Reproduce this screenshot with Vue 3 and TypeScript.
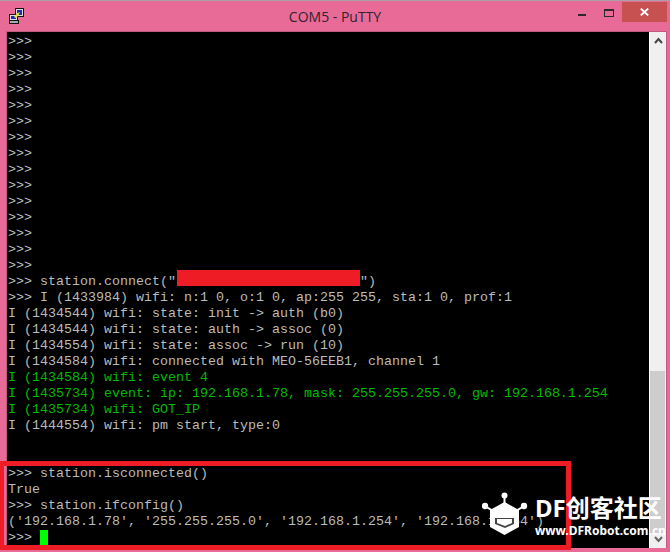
<script setup lang="ts">
interface Line { text: string; green?: boolean }
const prompts: Line[] = Array.from({ length: 15 }, () => ({ text: '>>>' }))
const lines: Line[] = [
  ...prompts,
  { text: '>>> station.connect("                       ")' },
  { text: '>>> I (1433984) wifi: n:1 0, o:1 0, ap:255 255, sta:1 0, prof:1' },
  { text: 'I (1434544) wifi: state: init -> auth (b0)' },
  { text: 'I (1434544) wifi: state: auth -> assoc (0)' },
  { text: 'I (1434554) wifi: state: assoc -> run (10)' },
  { text: 'I (1434584) wifi: connected with MEO-56EEB1, channel 1' },
  { text: 'I (1434584) wifi: event 4', green: true },
  { text: 'I (1435734) event: ip: 192.168.1.78, mask: 255.255.255.0, gw: 192.168.1.254', green: true },
  { text: 'I (1435734) wifi: GOT_IP', green: true },
  { text: 'I (1444554) wifi: pm start, type:0' },
  { text: '' },
  { text: '' },
  { text: '>>> station.isconnected()' },
  { text: 'True' },
  { text: '>>> station.ifconfig()' },
  { text: "('192.168.1.78', '255.255.255.0', '192.168.1.254', '192.168.1.254')" },
  { text: '>>> ' },
]
</script>

<template>
  <div class="window">
    <header class="titlebar">
      <div class="side">
        <svg class="app-icon" width="18" height="18" viewBox="0 0 18 18">
          <rect x="7.5" y="0.5" width="8" height="8" fill="#ddd" stroke="#111" />
          <rect x="9" y="2" width="5" height="5" fill="#1a2fb0" />
          <rect x="1.5" y="6.5" width="8" height="6" fill="#ddd" stroke="#111" />
          <rect x="3" y="8" width="5" height="3" fill="#1a2fb0" />
          <rect x="1.5" y="12.5" width="9" height="3" fill="#aaa" stroke="#111" />
          <path d="M6 9 L9 5.5 L12 4 L10.5 7 L8 10 Z" fill="#f5e616" />
        </svg>
      </div>
      <span class="title">COM5 - PuTTY</span>
      <div class="side controls">
        <span class="ctl"><i class="min"></i></span>
        <span class="ctl"><i class="max"></i></span>
        <span class="ctl close">
          <svg width="9" height="8" viewBox="0 0 9 8"><path d="M.8.5 8.2 7.5M8.2.5.8 7.5" stroke="#fff" stroke-width="1.8" fill="none" /></svg>
        </span>
      </div>
    </header>
    <div class="body">
      <main class="term">
        <div v-for="(l, i) in lines" :key="i" class="line" :class="{ green: l.green }">{{ l.text }}<span v-if="i === lines.length - 1" class="cursor"></span></div>
      </main>
      <aside class="scroll">
        <svg class="arrow" width="9" height="7" viewBox="0 0 9 7"><path d="M1 6 4.5 2 8 6" stroke="#444" stroke-width="2" fill="none" /></svg>
        <div class="track"><div class="thumb"></div></div>
        <svg class="arrow down" width="9" height="7" viewBox="0 0 9 7"><path d="M1 1 4.5 5 8 1" stroke="#666" stroke-width="2" fill="none" /></svg>
      </aside>
    </div>
    <div class="redact"></div>
    <div class="highlight"></div>
    <div class="mark">
      <svg class="mark-icon" width="46" height="46" viewBox="0 0 46 46">
        <g stroke="#fff" stroke-width="2" fill="#fff">
          <path d="M22.5 4V14M3 14 11 19M42 14 34 19" />
          <circle cx="22.5" cy="3.5" r="2" /><circle cx="3" cy="14" r="2.2" /><circle cx="42" cy="14" r="2.2" />
        </g>
        <path d="M22.5 10 37 18V35L22.5 43 8 35V18Z" fill="#fff" />
        <path d="M13 26H32V32L23 36 13 32Z" fill="#444" />
        <path d="M15 27H30V31L23 34 15 31Z" fill="#fff" />
      </svg>
      <div class="brand">
        <div class="b1">DF创客社区</div>
        <div class="b2">www.DFRobot.com.cn</div>
      </div>
    </div>
  </div>
</template>

<style>
html, body { margin: 0; background: #e86a96; overflow: hidden; }
</style>

<style scoped>
.window {
  position: relative;
  width: 670px;
  height: 552px;
  box-sizing: border-box;
  background: #e86a96;
  border-top: 1px solid #a8a0a4;
  overflow: hidden;
}
.titlebar {
  height: 30px;
  display: grid;
  grid-template-columns: 1fr auto 1fr;
  align-items: start;
  font-family: "Open Sans", "Noto Sans", sans-serif;
}
.side { display: flex; }
.app-icon { margin: 7px 0 0 8px; }
.title {
  font-size: 14px;
  line-height: 31px;
  color: #33222c;
}
.controls { justify-content: flex-end; margin: 1px 3px 0 0; }
.ctl {
  display: flex;
  align-items: center;
  justify-content: center;
  width: 27px;
  height: 20px;
}
.ctl.close { background: #c75050; width: 45px; }
.min { display: block; width: 8px; height: 2px; background: #2a2a2a; margin-top: 5px; }
.max { display: block; width: 8px; height: 5px; border: 1px solid #2a2a2a; border-top-width: 2px; margin-top: 2px; }
.body {
  display: flex;
  height: 517px;
  margin-left: 6px;
  margin-right: 3px;
  border: 1px solid #c05a80;
  border-bottom: 0;
  box-sizing: border-box;
}
.term {
  flex: 1;
  background: #000;
  padding-top: 2px;
  font-family: "Liberation Mono", monospace;
  font-size: 13.33px;
  line-height: 16px;
  color: #bbb;
  white-space: pre;
  overflow: hidden;
}
.line { height: 16px; padding-left: 1px; }
.green { color: #00bb00; }
.cursor {
  display: inline-block;
  width: 8px;
  height: 16px;
  background: #0f0;
  vertical-align: top;
}
.scroll {
  width: 17px;
  box-sizing: border-box;
  background: #f0f0f0;
  display: flex;
  flex-direction: column;
  align-items: center;
  border-left: 1px solid #fff;
}
.arrow { flex: none; margin: 5px 0; }
.arrow.down { margin: 3px 0 5px; }
.track { flex: 1; display: flex; flex-direction: column; justify-content: flex-end; width: 100%; }
.thumb { height: 162px; margin: 0 1px 0 0; background: #cdcdcd; }
.redact {
  position: absolute;
  left: 177px;
  top: 269px;
  width: 183px;
  height: 16px;
  background: #ee1c25;
}
.highlight {
  position: absolute;
  left: 0;
  top: 460px;
  width: 571px;
  height: 89px;
  box-sizing: border-box;
  border: 5px solid #ee1c25;
  border-left-width: 4px;
}
.mark {
  position: absolute;
  left: 482px;
  top: 491px;
  display: flex;
  gap: 7px;
  color: #fff;
}
.mark-icon { flex: none; }
.brand { font-family: "Noto Sans", "Noto Sans CJK SC", sans-serif; margin-top: 1px; }
.b1 { font-size: 24px; line-height: 30px; font-weight: 700; white-space: nowrap; }
.b2 { font-size: 12px; line-height: 16px; font-weight: 700; white-space: nowrap; }
</style>
